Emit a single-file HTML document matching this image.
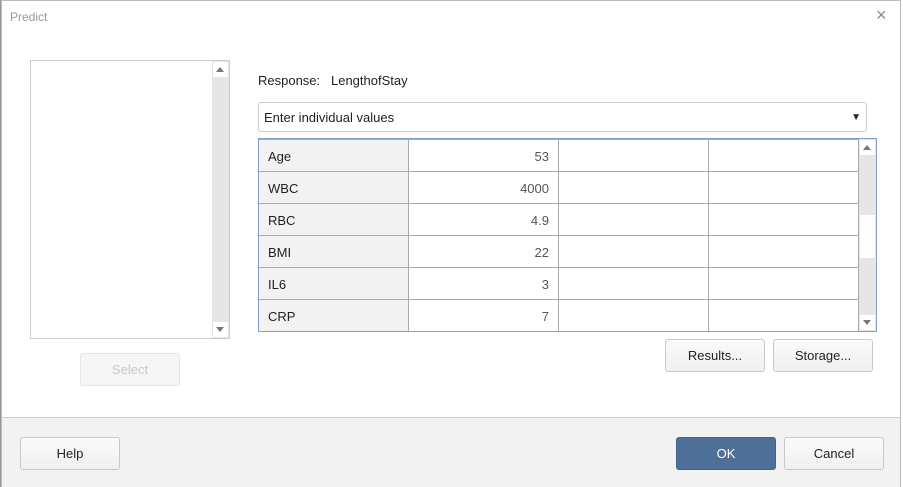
<!DOCTYPE html>
<html><head><style>
*{box-sizing:border-box;margin:0;padding:0}
body{width:903px;height:487px;position:relative;background:#fff;font-family:"Liberation Sans",sans-serif;font-size:13px;color:#222;overflow:hidden}
.a{position:absolute}
.btn{position:absolute;border:1px solid #c8c8c8;border-radius:3px;background:linear-gradient(#fafafa,#f0f0f0);text-align:center;line-height:32px;font-size:13px;color:#222}
td{border:1px solid #aaa;height:32px;padding:1px 9px 0;font-size:13px}
.up,.dn{position:absolute;width:15px;height:15px;background:#fff}
.up:after{content:"";position:absolute;left:3px;top:5px;border-left:4px solid transparent;border-right:4px solid transparent;border-bottom:5px solid #777}
.dn:after{content:"";position:absolute;left:3px;top:5px;border-left:4px solid transparent;border-right:4px solid transparent;border-top:5px solid #777}
</style></head><body>
<div class="a" style="left:0;top:0;width:2px;height:487px;background:#999"></div>
<div class="a" style="left:1px;top:0;width:900px;height:487px;border:1px solid #bbb;background:#fff"></div>
<div class="a" style="left:10px;top:10px;color:#999;font-size:12px">Predict</div>
<div class="a" style="left:876px;top:5px;color:#888;font-size:18px">×</div>
<div class="a" style="left:30px;top:60px;width:200px;height:279px;border:1px solid #ccc;background:#fff"></div>
<div class="a" style="left:212px;top:61px;width:17px;height:277px;background:#e6e6e6"></div>
<div class="up" style="left:213px;top:62px"></div>
<div class="dn" style="left:213px;top:322px"></div>
<div class="btn" style="left:80px;top:353px;width:100px;height:33px;color:#c8c8c8;border-color:#e6e6e6;background:#f6f6f6">Select</div>
<div class="a" style="left:258px;top:73px">Response:&nbsp;&nbsp; LengthofStay</div>
<div class="a" style="left:258px;top:102px;width:609px;height:30px;border:1px solid #ccc;border-radius:3px;padding-left:5px;line-height:30px">Enter individual values<span style="position:absolute;right:5px;font-size:10px">▼</span></div>
<div class="a" style="left:258px;top:138px;width:619px;height:194px;border:1px solid #7f9fd0;overflow:hidden">
<table style="border-collapse:collapse;position:absolute;left:-1px;top:0;width:601px">
<tr><td style="background:#f2f2f2;width:150px">Age</td><td style="text-align:right;color:#555;width:150px">53</td><td style="width:150px"></td><td></td></tr>
<tr><td style="background:#f2f2f2">WBC</td><td style="text-align:right;color:#555">4000</td><td></td><td></td></tr>
<tr><td style="background:#f2f2f2">RBC</td><td style="text-align:right;color:#555">4.9</td><td></td><td></td></tr>
<tr><td style="background:#f2f2f2">BMI</td><td style="text-align:right;color:#555">22</td><td></td><td></td></tr>
<tr><td style="background:#f2f2f2">IL6</td><td style="text-align:right;color:#555">3</td><td></td><td></td></tr>
<tr><td style="background:#f2f2f2">CRP</td><td style="text-align:right;color:#555">7</td><td></td><td></td></tr>
</table>
<div class="a" style="left:600px;top:0;width:17px;height:192px;background:#e6e6e6"></div>
<div class="up" style="left:601px;top:1px"></div>
<div class="a" style="left:601px;top:76px;width:15px;height:43px;background:#fff"></div>
<div class="dn" style="left:601px;top:176px"></div>
</div>
<div class="btn" style="left:665px;top:339px;width:100px;height:33px">Results...</div>
<div class="btn" style="left:773px;top:339px;width:100px;height:33px">Storage...</div>
<div class="a" style="left:2px;top:417px;width:898px;height:70px;background:#f2f2f2;border-top:1px solid #ccc"></div>
<div class="btn" style="left:20px;top:437px;width:100px;height:33px">Help</div>
<div class="btn" style="left:676px;top:437px;width:100px;height:33px;background:#4e6f98;border-color:#46648a;color:#fff">OK</div>
<div class="btn" style="left:784px;top:437px;width:100px;height:33px">Cancel</div>
</body></html>
